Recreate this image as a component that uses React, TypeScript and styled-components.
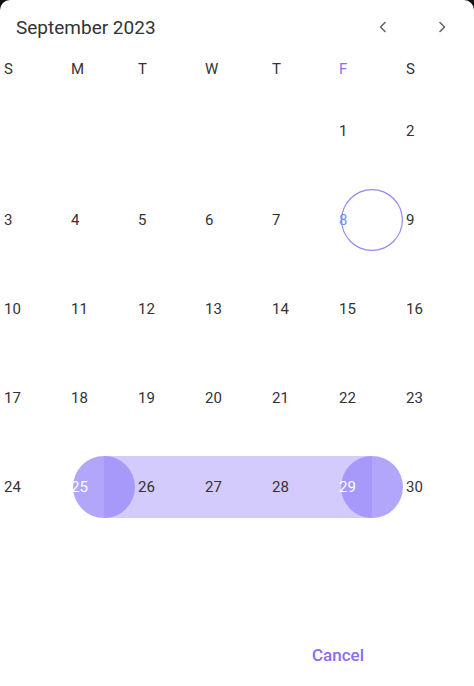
import React from 'react';
import styled, { createGlobalStyle, css } from 'styled-components';

const GlobalStyle = createGlobalStyle`
  html, body {
    margin: 0;
    padding: 0;
    background: #111;
  }
  * {
    box-sizing: border-box;
  }
`;

const Sheet = styled.div`
  width: 474px;
  height: 686px;
  background: #fff;
  border-radius: 10px 10px 0 0;
  display: flex;
  flex-direction: column;
  font-family: Roboto, 'Noto Sans', sans-serif;
  color: #333;
  overflow: hidden;
`;

const Header = styled.div`
  height: 54px;
  display: flex;
  align-items: center;
  justify-content: space-between;
  padding: 0 14px 0 16px;
`;

const Title = styled.div`
  font-size: 19px;
  color: #333;
`;

const Nav = styled.div`
  display: flex;
  gap: 23px;
`;

const NavButton = styled.button`
  width: 36px;
  height: 36px;
  border: none;
  background: none;
  padding: 0;
  display: flex;
  align-items: center;
  justify-content: center;
  color: #666;
  cursor: pointer;
`;

const Grid = styled.div`
  display: grid;
  grid-template-columns: repeat(7, 67px);
  padding-left: 4px;
`;

const WeekDay = styled.div<{ $accent?: boolean }>`
  height: 30px;
  margin-bottom: 2px;
  display: flex;
  align-items: center;
  font-size: 15px;
  color: ${({ $accent }) => ($accent ? '#8b6ff1' : '#333')};
`;

type RangePos = 'none' | 'start' | 'middle' | 'end';

const BAND = '#d3cbfc';

const Cell = styled.div`
  height: 89px;
  display: flex;
  align-items: center;
`;

const Track = styled.div<{ $range: RangePos }>`
  width: 100%;
  height: 62px;
  ${({ $range }) =>
    $range === 'start' &&
    css`
      background: linear-gradient(to right, transparent 33px, ${BAND} 33px);
    `}
  ${({ $range }) =>
    $range === 'middle' &&
    css`
      background: ${BAND};
    `}
  ${({ $range }) =>
    $range === 'end' &&
    css`
      background: linear-gradient(to right, ${BAND} 33px, transparent 33px);
    `}
`;

const Day = styled.div<{ $edge?: boolean; $today?: boolean }>`
  width: 62px;
  height: 62px;
  margin-left: 2px;
  border-radius: 50%;
  display: flex;
  align-items: center;
  text-indent: -2px;
  font-size: 15px;
  color: #333;
  ${({ $edge }) =>
    $edge &&
    css`
      background: rgba(152, 136, 250, 0.75);
      color: #fff;
    `}
  ${({ $today }) =>
    $today &&
    css`
      box-shadow: inset 0 0 0 1.2px #9985f6;
      color: #5b9cf5;
    `}
`;

const Footer = styled.div`
  margin-top: auto;
  display: flex;
  justify-content: flex-end;
  padding: 0 102px 11px 0;
`;

const TextButton = styled.button`
  height: 40px;
  padding: 0 8px;
  border: none;
  background: none;
  font-family: Roboto, 'Noto Sans', sans-serif;
  font-size: 17px;
  font-weight: 500;
  color: #8a6df1;
  cursor: pointer;
`;

const Chevron = ({ dir }: { dir: 'left' | 'right' }) => (
  <svg width="14" height="14" viewBox="0 0 14 14" fill="none">
    <path
      d={dir === 'left' ? 'M9 2.5 L4.5 7 L9 11.5' : 'M5 2.5 L9.5 7 L5 11.5'}
      stroke="currentColor"
      strokeWidth="1.6"
      strokeLinecap="round"
      strokeLinejoin="round"
    />
  </svg>
);

const weekDays = ['S', 'M', 'T', 'W', 'T', 'F', 'S'];
const firstOffset = 5;
const daysInMonth = 30;
const today = 8;
const rangeStart = 25;
const rangeEnd = 29;

const rangePos = (d: number): RangePos => {
  if (d === rangeStart) return 'start';
  if (d === rangeEnd) return 'end';
  if (d > rangeStart && d < rangeEnd) return 'middle';
  return 'none';
};

export default function App() {
  const cells: (number | null)[] = [
    ...Array.from({ length: firstOffset }, () => null),
    ...Array.from({ length: daysInMonth }, (_, i) => i + 1),
  ];

  return (
    <>
      <GlobalStyle />
      <Sheet>
        <Header>
          <Title>September 2023</Title>
          <Nav>
            <NavButton aria-label="Previous month">
              <Chevron dir="left" />
            </NavButton>
            <NavButton aria-label="Next month">
              <Chevron dir="right" />
            </NavButton>
          </Nav>
        </Header>
        <Grid>
          {weekDays.map((d, i) => (
            <WeekDay key={i} $accent={i === 5}>
              {d}
            </WeekDay>
          ))}
        </Grid>
        <Grid>
          {cells.map((d, i) => (
            <Cell key={i}>
              {d !== null && (
                <Track $range={rangePos(d)}>
                  <Day $edge={d === rangeStart || d === rangeEnd} $today={d === today}>
                    {d}
                  </Day>
                </Track>
              )}
            </Cell>
          ))}
        </Grid>
        <Footer>
          <TextButton>Cancel</TextButton>
        </Footer>
      </Sheet>
    </>
  );
}
